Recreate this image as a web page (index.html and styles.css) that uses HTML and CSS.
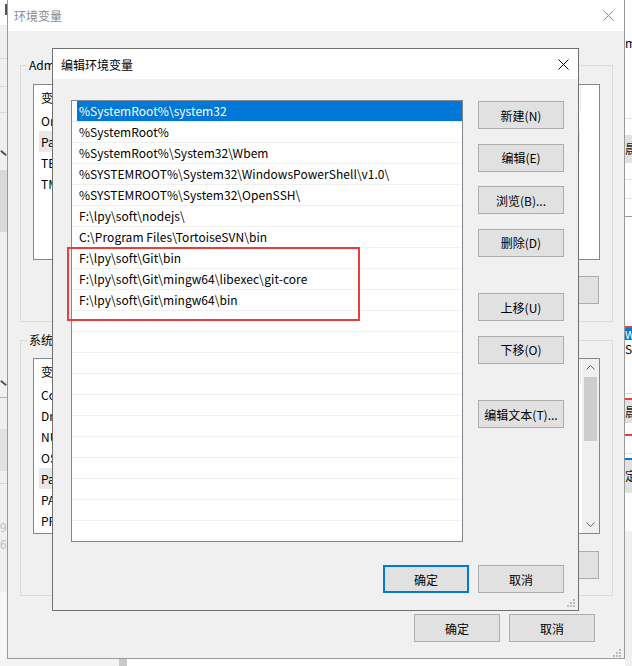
FILE: index.html
```html
<!DOCTYPE html>
<html lang="zh-CN">
<head>
  <meta charset="UTF-8">
  <meta name="viewport" content="width=device-width, initial-scale=1.0">
  <title>编辑环境变量</title>
  <link rel="stylesheet" href="styles.css">
</head>
<body>
  <div class="desktop">

    <!-- window behind, left sliver -->
    <div class="bg-left">
      <div class="bl-top"><i class="bl-glyph"></i></div>
      <div class="bl-band bl-a"></div>
      <div class="bl-band bl-b"></div>
      <div class="bl-band bl-c"></div>
      <div class="bl-band bl-d"><i class="bl-tick"></i></div>
      <div class="bl-band bl-e"></div>
      <div class="bl-band bl-f"><i class="bl-tick"></i></div>
      <div class="bl-band bl-g"></div>
      <div class="bl-band bl-h"></div>
      <div class="bl-band bl-i"></div>
      <div class="bl-band bl-j"><span>9a</span><span>6L</span></div>
      <div class="bl-rest"></div>
    </div>

    <!-- window behind, right sliver -->
    <div class="bg-right">
      <div class="br-title"></div>
      <div class="br-a">m</div>
      <div class="br-gap17"></div>
      <div class="br-gray br-g28">晨</div>
      <div class="br-line br-h17"></div>
      <div class="br-line br-h19"></div>
      <div class="br-line br-dark br-h18"></div>
      <div class="br-h109"></div>
      <div class="br-red"></div>
      <div class="br-sel">W</div>
      <div class="br-sf">SF</div>
      <div class="br-h4"></div>
      <div class="br-red"></div>
      <div class="br-gray br-g23">晨</div>
      <div class="br-h11"></div>
      <div class="br-red"></div>
      <div class="br-line br-h18"></div>
      <div class="br-h4"></div>
      <div class="br-blue"></div>
      <div class="br-gray br-g33">定</div>
      <div class="br-h38"></div>
      <div class="br-rest"></div>
    </div>

    <div class="bg-bottom">
      <div class="bb-left"></div>
      <div class="bb-bar"></div>
    </div>

    <!-- 环境变量 -->
    <div class="win outer">
      <div class="titlebar">
        <span class="title">环境变量</span>
        <svg class="close" width="11" height="11" viewBox="0 0 11 11"><path d="M0.5 0.5L10.5 10.5M10.5 0.5L0.5 10.5" stroke="#8a8a8a" stroke-width="1" fill="none"/></svg>
      </div>
      <div class="outer-body">
        <fieldset class="group">
          <legend>Adm</legend>
          <div class="listview">
            <div class="lv-main">
              <div class="lv-head"><span class="c1">变</span><span class="c2"></span></div>
              <div class="lv-row"><span class="c1">On</span><span class="c2"></span></div>
              <div class="lv-row sel"><span class="c1">Pa</span><span class="c2"></span></div>
              <div class="lv-row"><span class="c1">TE</span><span class="c2"></span></div>
              <div class="lv-row"><span class="c1">TM</span><span class="c2"></span></div>
            </div>
          </div>
          <div class="grp-btns">
            <button></button>
            <button></button>
            <button></button>
          </div>
        </fieldset>

        <fieldset class="group group-sys">
          <legend>系统</legend>
          <div class="listview">
            <div class="lv-main">
              <div class="lv-head"><span class="c1">变</span><span class="c2"></span></div>
              <div class="lv-row"><span class="c1">Co</span><span class="c2"></span></div>
              <div class="lv-row"><span class="c1">Dr</span><span class="c2"></span></div>
              <div class="lv-row"><span class="c1">NU</span><span class="c2"></span></div>
              <div class="lv-row"><span class="c1">OS</span><span class="c2"></span></div>
              <div class="lv-row sel"><span class="c1">Pa</span><span class="c2"></span></div>
              <div class="lv-row"><span class="c1">PA</span><span class="c2"></span></div>
              <div class="lv-row"><span class="c1">PR</span><span class="c2"></span></div>
            </div>
            <div class="vscroll">
              <div class="sb-arrow"><svg width="9" height="5" viewBox="0 0 9 5"><path d="M0.5 4.5L4.5 0.5L8.5 4.5" stroke="#606060" fill="none"/></svg></div>
              <div class="sb-track"><div class="sb-thumb"></div></div>
              <div class="sb-arrow"><svg width="9" height="5" viewBox="0 0 9 5"><path d="M0.5 0.5L4.5 4.5L8.5 0.5" stroke="#606060" fill="none"/></svg></div>
            </div>
          </div>
          <div class="grp-btns">
            <button></button>
            <button></button>
            <button></button>
          </div>
        </fieldset>

        <div class="foot outer-foot">
          <button>确定</button>
          <button>取消</button>
        </div>
      </div>
      <svg class="grip" width="8" height="8" viewBox="0 0 8 8"><path d="M6 0h2v2h-2zM3 3h2v2h-2zM6 3h2v2h-2zM0 6h2v2h-2zM3 6h2v2h-2zM6 6h2v2h-2z" fill="#bcbcbc"/></svg>
    </div>

    <!-- 编辑环境变量 -->
    <div class="win inner">
      <div class="titlebar">
        <span class="title">编辑环境变量</span>
        <svg class="close" width="11" height="11" viewBox="0 0 11 11"><path d="M0.5 0.5L10.5 10.5M10.5 0.5L0.5 10.5" stroke="#000" stroke-width="1" fill="none"/></svg>
      </div>
      <div class="inner-body">
        <div class="inner-main">
          <div class="pathlist">
            <div class="item sel"><span>%SystemRoot%\system32</span></div>
            <div class="item"><span>%SystemRoot%</span></div>
            <div class="item"><span>%SystemRoot%\System32\Wbem</span></div>
            <div class="item"><span>%SYSTEMROOT%\System32\WindowsPowerShell\v1.0\</span></div>
            <div class="item"><span>%SYSTEMROOT%\System32\OpenSSH\</span></div>
            <div class="item"><span>F:\lpy\soft\nodejs\</span></div>
            <div class="item"><span>C:\Program Files\TortoiseSVN\bin</span></div>
            <div class="item"><span>F:\lpy\soft\Git\bin</span></div>
            <div class="item"><span>F:\lpy\soft\Git\mingw64\libexec\git-core</span></div>
            <div class="item"><span>F:\lpy\soft\Git\mingw64\bin</span></div>
            <div class="item"><span></span></div>
            <div class="item"><span></span></div>
            <div class="item"><span></span></div>
            <div class="item"><span></span></div>
            <div class="item"><span></span></div>
            <div class="item"><span></span></div>
            <div class="item"><span></span></div>
            <div class="item"><span></span></div>
            <div class="item"><span></span></div>
            <div class="item"><span></span></div>
            <div class="item"><span></span></div>
          </div>
          <div class="side-btns">
            <button>新建(N)</button>
            <button>编辑(E)</button>
            <button>浏览(B)...</button>
            <button>删除(D)</button>
            <button class="sep">上移(U)</button>
            <button>下移(O)</button>
            <button class="sep">编辑文本(T)...</button>
          </div>
        </div>
        <div class="foot inner-foot">
          <button class="default">确定</button>
          <button>取消</button>
        </div>
      </div>
      <div class="mark"></div>
      <svg class="grip" width="8" height="8" viewBox="0 0 8 8"><path d="M6 0h2v2h-2zM3 3h2v2h-2zM6 3h2v2h-2zM0 6h2v2h-2zM3 6h2v2h-2zM6 6h2v2h-2z" fill="#bcbcbc"/></svg>
    </div>

  </div>
</body>
</html>
```

FILE: styles.css
```css
* {
  box-sizing: border-box;
}
body {
  margin: 0;
  font-family: "Noto Sans CJK SC", "Noto Sans", sans-serif;
  font-size: 12px;
  color: #000;
}
.desktop {
  position: relative;
  width: 632px;
  height: 666px;
  overflow: hidden;
  background: #fff;
}

/* background windows */
.bg-left {
  position: absolute;
  left: 0;
  top: 0;
  width: 8px;
  height: 666px;
  display: flex;
  flex-direction: column;
  overflow: hidden;
}
.bl-top {
  height: 25px;
  background: #fff;
  padding: 4px 0 0 5px;
}
.bl-glyph {
  display: block;
  width: 2px;
  height: 11px;
  background: #555;
}
.bl-band {
  background: #f0f0f0;
  border-bottom: 1px solid #dadada;
}
.bl-a { height: 34px; }
.bl-b { height: 28px; }
.bl-c { height: 26px; }
.bl-d { height: 57px; border-bottom: none; padding-top: 39px; }
.bl-e { height: 62px; background: #d9d9d9; border-bottom: none; }
.bl-f { height: 166px; border-bottom-color: #b4b4b4; padding-top: 150px; }
.bl-g { height: 31px; border-bottom: none; }
.bl-h { height: 42px; background: #e1e1e1; border-bottom: none; }
.bl-i { height: 13px; }
.bl-j {
  height: 108px;
  border-bottom: none;
  display: flex;
  flex-direction: column;
  padding-top: 34px;
  line-height: 17px;
  color: #bdbdbd;
}
.bl-tick {
  display: block;
  width: 7px;
  height: 2px;
  background: #555;
  transform: rotate(40deg);
}
.bl-rest {
  flex: 1;
  background: #f8f8f8;
}

.bg-right {
  position: absolute;
  left: 625px;
  top: 0;
  width: 7px;
  height: 666px;
  display: flex;
  flex-direction: column;
  overflow: hidden;
  white-space: nowrap;
  background: #fff;
}
.br-title { height: 31px; }
.br-a {
  height: 88px;
  padding-top: 4px;
  line-height: 16px;
  border-bottom: 1px solid #e3e3e3;
}
.br-gap17 { height: 16px; }
.br-gray {
  background: #e1e1e1;
  color: #222;
}
.br-g28 { height: 28px; line-height: 28px; }
.br-g23 { height: 23px; line-height: 23px; }
.br-g33 { height: 33px; line-height: 31px; }
.br-line { border-bottom: 1px solid #e3e3e3; }
.br-dark { border-bottom-color: #9a9a9a; }
.br-h17 { height: 17px; }
.br-h19 { height: 19px; }
.br-h18 { height: 18px; }
.br-h109 { height: 109px; }
.br-h4 { height: 4px; }
.br-h11 { height: 11px; }
.br-h38 { height: 38px; }
.br-red { height: 2px; background: #ee3b3b; }
.br-blue { height: 2px; background: #0078d7; }
.br-sel {
  height: 12px;
  font-size: 11px;
  line-height: 12px;
  overflow: hidden;
  background: #0078d7;
  color: #fff;
}
.br-sf {
  height: 54px;
  padding-top: 2px;
  line-height: 14px;
  border-bottom: 1px solid #d9d9d9;
}
.br-rest {
  flex: 1;
  background: #f0f0f0;
}

.bg-bottom {
  position: absolute;
  left: 0;
  top: 659px;
  width: 632px;
  height: 7px;
  display: flex;
}
.bb-left {
  width: 119px;
  background: #f3f3f3;
}
.bb-bar {
  width: 8px;
  background: #c9c9c9;
}

/* dialogs */
.win {
  position: absolute;
  background: #f0f0f0;
  display: flex;
  flex-direction: column;
}
.titlebar {
  height: 30px;
  flex: none;
  background: #fff;
  display: flex;
  align-items: center;
  justify-content: space-between;
}
.grip {
  position: absolute;
  right: 3px;
  bottom: 3px;
}
button {
  width: 86px;
  height: 28px;
  padding: 0;
  margin: 0;
  background: #e1e1e1;
  border: 1px solid #adadad;
  font-family: inherit;
  font-size: 12px;
  color: #000;
}
.foot {
  display: flex;
  justify-content: flex-end;
  gap: 9px;
}

.outer {
  left: 7px;
  top: -1px;
  width: 618px;
  height: 660px;
  border: 1px solid #9a9a9a;
}
.outer .titlebar {
  height: 31px;
  padding: 0 10px 0 6px;
}
.outer .title {
  color: #8a8a8a;
}
.outer-body {
  flex: 1;
  padding-top: 26px;
  display: flex;
  flex-direction: column;
}
.group {
  margin: 0 11px 0 12px;
  padding: 11px 12px 17px 6px;
  border: 1px solid #dcdcdc;
  min-width: 0;
}
.group legend {
  padding: 0 2px;
  line-height: 16px;
}
.group-sys {
  margin-top: 10px;
  padding-top: 10px;
  padding-bottom: 16px;
}
.listview {
  height: 176px;
  margin-left: 6px;
  border: 1px solid #828790;
  background: #fff;
  display: flex;
  overflow: hidden;
}
.lv-main {
  flex: 1;
  min-width: 0;
  white-space: nowrap;
}
.lv-head {
  height: 25px;
  line-height: 25px;
  display: flex;
}
.lv-head .c1 {
  width: 170px;
  padding-left: 7px;
  border-right: 1px solid #e5e5e5;
}
.lv-head .c2 {
  width: 377px;
  border-right: 1px solid #e5e5e5;
}
.lv-row {
  height: 21px;
  line-height: 21px;
  margin: 0 19px 0 5px;
  padding-left: 2px;
  display: flex;
}
.lv-row.sel {
  background: #e8e8e8;
}
.lv-row .c1 {
  width: 165px;
  overflow: hidden;
}
.lv-row .c2 {
  flex: 1;
}
.vscroll {
  width: 17px;
  background: #f0f0f0;
  display: flex;
  flex-direction: column;
}
.sb-arrow {
  height: 17px;
  display: flex;
  align-items: center;
  justify-content: center;
}
.sb-track {
  flex: 1;
  padding: 1px 2px;
}
.sb-thumb {
  height: 64px;
  background: #cdcdcd;
}
.grp-btns {
  display: flex;
  justify-content: flex-end;
  gap: 9px;
  margin: 16px 1px 0 0;
}
.group-sys .grp-btns {
  margin-top: 17px;
}
.outer-foot {
  margin-top: 18px;
  padding-right: 29px;
}
.outer .grip {
  bottom: 1px;
}

.inner {
  left: 52px;
  top: 48px;
  width: 527px;
  height: 563px;
  border: 1px solid #707070;
}
.inner .titlebar {
  padding: 0 9px 0 8px;
}
.inner-body {
  flex: 1;
  padding: 21px 14px 0 18px;
  display: flex;
  flex-direction: column;
}
.inner-main {
  display: flex;
  gap: 15px;
}
.pathlist {
  width: 392px;
  height: 442px;
  border: 1px solid #828790;
  background: #fff;
  overflow: hidden;
}
.item {
  height: 21px;
  padding-left: 5px;
  border-bottom: 1px solid #f0f0f0;
  display: flex;
}
.item span {
  flex: 1;
  padding-left: 2px;
  line-height: 20px;
  white-space: nowrap;
  letter-spacing: 0.05px;
}
.item.sel span {
  background: #0078d7;
  color: #fff;
}
.side-btns {
  display: flex;
  flex-direction: column;
  gap: 14.5px;
  padding-top: 1px;
}
.side-btns .sep {
  margin-top: 22px;
}
.inner-foot {
  margin-top: 23px;
}
.inner-foot .default {
  border: 2px solid #0078d7;
}
.mark {
  position: absolute;
  left: 14px;
  top: 198px;
  width: 293px;
  height: 74px;
  border: 2px solid #ee3b3b;
}
```
